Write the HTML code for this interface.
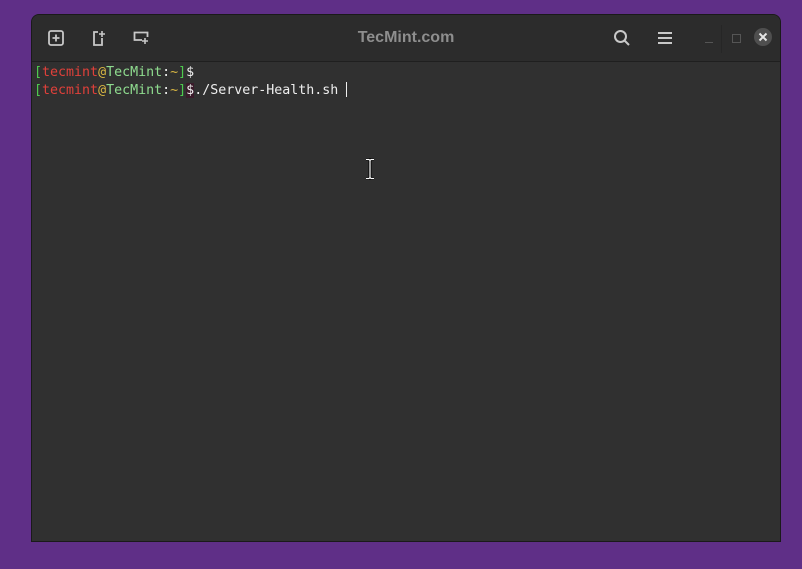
<!DOCTYPE html>
<html><head><meta charset="utf-8"><style>
html,body{margin:0;padding:0;width:802px;height:569px;overflow:hidden;background:#5f2f87;}
.win{position:absolute;left:31px;top:14px;width:748px;height:526px;background:#303030;border:1px solid #1a1a1a;border-radius:8px 8px 0 0;overflow:hidden;}
.hdr{position:absolute;left:0;top:0;width:748px;height:46px;background:#2c2c2c;border-bottom:1px solid #1f1f1f;}
.title{position:absolute;left:0;width:748px;top:14px;text-align:center;font:bold 16px "Liberation Sans",sans-serif;color:#8e8e8e;}
.term{position:absolute;left:2px;top:49px;font:13.3px/18px "DejaVu Sans Mono","Liberation Mono",monospace;color:#eeeeee;white-space:pre;}
.g{color:#4ec94e}.r{color:#e0403a}.y{color:#d8b642}.gr{color:#8fdc8f}
svg{position:absolute}
</style></head><body>
<div class="win">
<div class="hdr">
<svg style="left:16px;top:15px" width="16" height="16" viewBox="0 0 16 16"><rect x="1" y="1" width="14" height="14" rx="2" fill="none" stroke="#c8c8c8" stroke-width="1.8"/><path d="M8 4.5v7M4.5 8h7" stroke="#c8c8c8" stroke-width="1.8"/></svg>
<svg style="left:60px;top:15px" width="14" height="16" viewBox="0 0 14 16"><path d="M6 2H2v13h8V8" fill="none" stroke="#c8c8c8" stroke-width="1.8"/><path d="M10 1v6M7 4h6" stroke="#c8c8c8" stroke-width="1.6"/></svg>
<svg style="left:101px;top:16px" width="17" height="14" viewBox="0 0 17 14"><path d="M9 9H1.5V1.5h13V6" fill="none" stroke="#c8c8c8" stroke-width="1.8"/><path d="M12 7v6M9 10h6" stroke="#c8c8c8" stroke-width="1.6"/></svg>
<div class="title">TecMint.com</div>
<svg style="left:581px;top:14px" width="18" height="18" viewBox="0 0 18 18"><circle cx="7.5" cy="7.5" r="5.5" fill="none" stroke="#c8c8c8" stroke-width="2"/><path d="M11.5 11.5l4.5 4.5" stroke="#c8c8c8" stroke-width="2"/></svg>
<svg style="left:625px;top:16px" width="16" height="14" viewBox="0 0 16 14"><path d="M1 2h14M1 7h14M1 12h14" stroke="#c8c8c8" stroke-width="2"/></svg>
<div style="position:absolute;left:689px;top:10px;width:1px;height:28px;background:#262626"></div>
<div style="position:absolute;left:673px;top:27px;width:8px;height:1px;background:#555"></div>
<div style="position:absolute;left:700px;top:19px;width:7px;height:7px;border:1px solid #555"></div>
<div style="position:absolute;left:722px;top:13px;width:18px;height:18px;border-radius:50%;background:#4f4f4f"></div>
<svg style="left:726px;top:17px" width="10" height="10" viewBox="0 0 10 10"><path d="M1.5 1.5l7 7M8.5 1.5l-7 7" stroke="#e6e6e6" stroke-width="2"/></svg>
</div>
<div class="term"><span class="g">[</span><span class="r">tecmint</span><span class="y">@</span><span class="gr">TecMint</span>:<span class="y">~</span><span class="g">]</span>$
<span class="g">[</span><span class="r">tecmint</span><span class="y">@</span><span class="gr">TecMint</span>:<span class="y">~</span><span class="g">]</span><span style="background:#3a1a2a">$</span>./Server-Health.sh <span style="display:inline-block;width:1px;height:15px;background:#eee;vertical-align:-3px"></span></div>
<svg style="left:333px;top:143px" width="10" height="22" viewBox="0 0 10 22"><path d="M1 1.5h3l1 1 1-1h3M5 2.5v17M1 20.5h3l1-1 1 1h3" fill="none" stroke="#000" stroke-width="3"/><path d="M1 1.5h3l1 1 1-1h3M5 2.5v17M1 20.5h3l1-1 1 1h3" fill="none" stroke="#fff" stroke-width="1.2"/></svg>
</div>
</body></html>
